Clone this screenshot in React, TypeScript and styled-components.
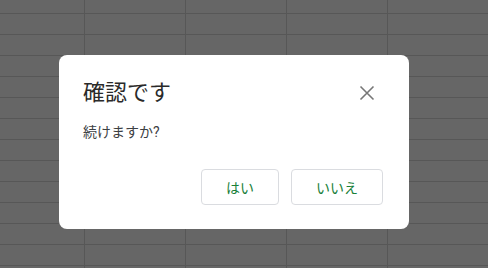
import styled, { createGlobalStyle } from 'styled-components';

const GlobalStyle = createGlobalStyle`
  html, body {
    margin: 0;
    padding: 0;
  }
  body {
    font-family: Roboto, "Noto Sans CJK JP", sans-serif;
  }
`;

const Sheet = styled.div`
  width: 488px;
  height: 268px;
  box-sizing: border-box;
  padding: 55px 0 0 59px;
  background-color: #666666;
  background-image: linear-gradient(90deg, #575757 1px, transparent 1px),
    linear-gradient(180deg, #575757 1px, transparent 1px);
  background-size: 101px 100%, 100% 21px;
  background-position: 84px 0, 0 13px;
  overflow: hidden;
`;

const Dialog = styled.div`
  width: 350px;
  height: 174px;
  box-sizing: border-box;
  padding: 24px;
  background: #fff;
  border-radius: 8px;
  display: flex;
  flex-direction: column;
`;

const Header = styled.div`
  display: flex;
  align-items: center;
  justify-content: space-between;
`;

const Title = styled.h2`
  margin: 0;
  font-size: 22px;
  line-height: 28px;
  font-weight: 400;
  color: #2a2a2a;
`;

const CloseButton = styled.button`
  display: flex;
  align-items: center;
  justify-content: center;
  width: 22px;
  height: 22px;
  margin-right: 7px;
  padding: 0;
  border: none;
  background: none;
  color: #777;
  cursor: pointer;
`;

const Message = styled.p`
  margin: 15px 0 0;
  font-size: 14px;
  line-height: 20px;
  color: #3c4043;
`;

const Actions = styled.div`
  margin-top: auto;
  display: flex;
  justify-content: flex-end;
  gap: 12px;
  padding-right: 2px;
`;

const Button = styled.button`
  height: 36px;
  padding: 0 24px;
  border: 1px solid #dadce0;
  border-radius: 4px;
  background: #fff;
  color: #188038;
  font-family: Roboto, "Noto Sans CJK JP", sans-serif;
  font-size: 14px;
  cursor: pointer;
`;

const CloseIcon = () => (
  <svg width="22" height="22" viewBox="0 0 22 22" fill="none" stroke="currentColor" strokeWidth="1.6">
    <path d="M4.5 4.5 17.5 17.5M17.5 4.5 4.5 17.5" />
  </svg>
);

export default function App() {
  return (
    <>
      <GlobalStyle />
      <Sheet>
        <Dialog>
          <Header>
            <Title>確認です</Title>
            <CloseButton aria-label="閉じる">
              <CloseIcon />
            </CloseButton>
          </Header>
          <Message>続けますか?</Message>
          <Actions>
            <Button>はい</Button>
            <Button>いいえ</Button>
          </Actions>
        </Dialog>
      </Sheet>
    </>
  );
}
